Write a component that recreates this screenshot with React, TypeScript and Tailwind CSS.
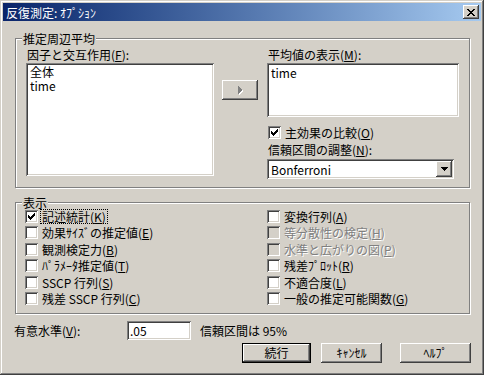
import React from 'react'

const raised = 'shadow-[inset_-1px_-1px_#404040,inset_1px_1px_#ffffff,inset_-2px_-2px_#808080,inset_2px_2px_#d4d0c8]'
const sunken = 'shadow-[inset_1px_1px_#808080,inset_-1px_-1px_#ffffff,inset_2px_2px_#404040,inset_-2px_-2px_#d4d0c8]'
const font = "font-['Noto_Sans_CJK_JP','Noto_Sans_CJK_SC',sans-serif]"
const dis = 'text-[#808080] [text-shadow:1px_1px_0_#ffffff]'

const Check = () => (
  <svg width="7" height="7" viewBox="0 0 7 7" shapeRendering="crispEdges">
    {[2, 3, 4, 3, 2, 1, 0].map((y, x) => <rect key={x} x={x} y={y} width="1" height="3" fill="#000" />)}
  </svg>
)

const Box = ({ checked, disabled }: { checked?: boolean; disabled?: boolean }) => (
  <span className={`w-[13px] h-[13px] shrink-0 flex items-center justify-center ${sunken} ${disabled ? 'bg-[#d4d0c8]' : 'bg-white'}`}>
    {checked && <Check />}
  </span>
)

// label with underlined mnemonic letter
const Mn = ({ pre, k, post = ')' }: { pre: string; k: string; post?: string }) => (
  <>{pre}(<u className="underline-offset-1 decoration-1">{k}</u>{post}</>
)

const Row = ({ children, checked, disabled, focus }: { children: React.ReactNode; checked?: boolean; disabled?: boolean; focus?: boolean }) => (
  <div className="h-[16.5px] flex items-center">
    <Box checked={checked} disabled={disabled} />
    <span className={`ml-[3px] px-[1px] leading-[13px] whitespace-nowrap ${focus ? 'outline outline-1 outline-dotted outline-black' : 'outline-none'} ${disabled ? dis : ''}`}>{children}</span>
  </div>
)

const Group = ({ title, className, children }: { title: string; className: string; children: React.ReactNode }) => (
  <div className={`relative border border-[#808080] shadow-[inset_1px_1px_#ffffff,1px_1px_#ffffff] ${className}`}>
    <span className="absolute left-[6px] -top-[7px] bg-[#d4d0c8] px-[1px] leading-[13px]">{title}</span>
    {children}
  </div>
)

const Btn = ({ children, w, def }: { children: React.ReactNode; w: string; def?: boolean }) => (
  <div className={`${w} h-[20px] flex items-center justify-center ${def ? 'border border-black' : ''}`}>
    <div className={`w-full h-full flex items-center justify-center ${raised}`}>{children}</div>
  </div>
)

export default function App() {
  return (
    <div className={`w-[484px] h-[375px] bg-[#d4d0c8] p-[3px] flex flex-col text-[12px] text-black ${font} shadow-[inset_-1px_-1px_#404040,inset_1px_1px_#d4d0c8,inset_-2px_-2px_#808080,inset_2px_2px_#ffffff]`}>
      {/* title bar */}
      <div className="h-[18px] flex items-center justify-between pl-[3px] pr-[2px] bg-gradient-to-r from-[#0a246a] to-[#a6caf0]">
        <span className="text-white leading-[13px] whitespace-nowrap">反復測定: ｵﾌﾟｼｮﾝ</span>
        <div className={`w-[16px] h-[14px] bg-[#d4d0c8] flex items-center justify-center ${raised}`}>
          <svg width="8" height="7" viewBox="0 0 8 7" shapeRendering="crispEdges">
            {[0, 1, 2, 3, 4, 5, 6].map(i => (
              <g key={i}>
                <rect x={i} y={i} width="2" height="1" fill="#000" />
                <rect x={6 - i} y={i} width="2" height="1" fill="#000" />
              </g>
            ))}
          </svg>
        </div>
      </div>

      {/* 推定周辺平均 */}
      <Group title="推定周辺平均" className="ml-[12px] mt-[17px] w-[455px] h-[150px] shrink-0 flex pl-[10px] pt-[9px]">
        <div className="flex flex-col w-[188px]">
          <span className="leading-[13px] pl-[1px]"><Mn pre="因子と交互作用" k="F" post="):" /></span>
          <div className={`mt-[2px] h-[113px] bg-white pl-[4px] pt-[2px] leading-[14px] ${sunken}`}>
            <div>全体</div>
            <div>time</div>
          </div>
        </div>
        <div className={`ml-[8px] mt-[32px] w-[36px] h-[20px] flex items-center justify-center ${raised}`}>
          <svg width="6" height="9" viewBox="0 0 6 9" shapeRendering="crispEdges">
            <polygon points="2,1 6,5 2,9" fill="#fff" />
            <polygon points="1,0 5,4 1,8" fill="#808080" />
          </svg>
        </div>
        <div className="ml-[9px] flex flex-col w-[192px]">
          <span className="leading-[13px] pl-[1px]"><Mn pre="平均値の表示" k="M" post="):" /></span>
          <div className={`mt-[2px] h-[54px] bg-white pl-[4px] pt-[3px] leading-[13px] ${sunken}`}>time</div>
          <div className="mt-[7px] h-[16px] flex items-center pl-[1px]">
            <Box checked />
            <span className="ml-[4px] leading-[13px]"><Mn pre="主効果の比較" k="O" /></span>
          </div>
          <span className="mt-[3px] leading-[13px] pl-[1px]"><Mn pre="信頼区間の調整" k="N" post="):" /></span>
          <div className={`mt-[3px] w-[187px] h-[20px] bg-white flex items-center pl-[4px] pr-[2px] ${sunken}`}>
            <span className="flex-1 leading-[13px]">Bonferroni</span>
            <div className={`w-[16px] h-[16px] bg-[#d4d0c8] flex items-center justify-center ${raised}`}>
              <svg width="7" height="4" viewBox="0 0 7 4" shapeRendering="crispEdges">
                <polygon points="0,0 7,0 3.5,4" fill="#000" />
              </svg>
            </div>
          </div>
        </div>
      </Group>

      {/* 表示 */}
      <Group title="表示" className="ml-[12px] mt-[14px] w-[455px] h-[112px] shrink-0 flex pl-[9px] pt-[5px]">
        <div className="w-[242px] flex flex-col">
          <Row checked focus><Mn pre="記述統計" k="K" /></Row>
          <Row><Mn pre="効果ｻｲｽﾞの推定値" k="E" /></Row>
          <Row><Mn pre="観測検定力" k="B" /></Row>
          <Row><Mn pre="ﾊﾟﾗﾒｰﾀ推定値" k="T" /></Row>
          <Row><Mn pre="SSCP 行列" k="S" /></Row>
          <Row><Mn pre="残差 SSCP 行列" k="C" /></Row>
        </div>
        <div className="flex flex-col">
          <Row><Mn pre="変換行列" k="A" /></Row>
          <Row disabled><Mn pre="等分散性の検定" k="H" /></Row>
          <Row disabled><Mn pre="水準と広がりの図" k="P" /></Row>
          <Row><Mn pre="残差ﾌﾟﾛｯﾄ" k="R" /></Row>
          <Row><Mn pre="不適合度" k="L" /></Row>
          <Row><Mn pre="一般の推定可能関数" k="G" /></Row>
        </div>
      </Group>

      {/* 有意水準 */}
      <div className="mt-[7px] h-[19px] flex items-center">
        <span className="ml-[11px] w-[113px] leading-[13px]"><Mn pre="有意水準" k="V" post="):" /></span>
        <div className={`w-[64px] h-[19px] bg-white flex items-center pl-[3px] leading-[13px] ${sunken}`}>.05</div>
        <span className="ml-[9px] leading-[13px]">信頼区間は 95%</span>
      </div>

      {/* buttons */}
      <div className="mt-[3px] flex">
        <div className="ml-[239px]"><Btn w="w-[69px]" def>続行</Btn></div>
        <div className="ml-[10px]"><Btn w="w-[61px]">ｷｬﾝｾﾙ</Btn></div>
        <div className="ml-[18px]"><Btn w="w-[71px]">ﾍﾙﾌﾟ</Btn></div>
      </div>
    </div>
  )
}
